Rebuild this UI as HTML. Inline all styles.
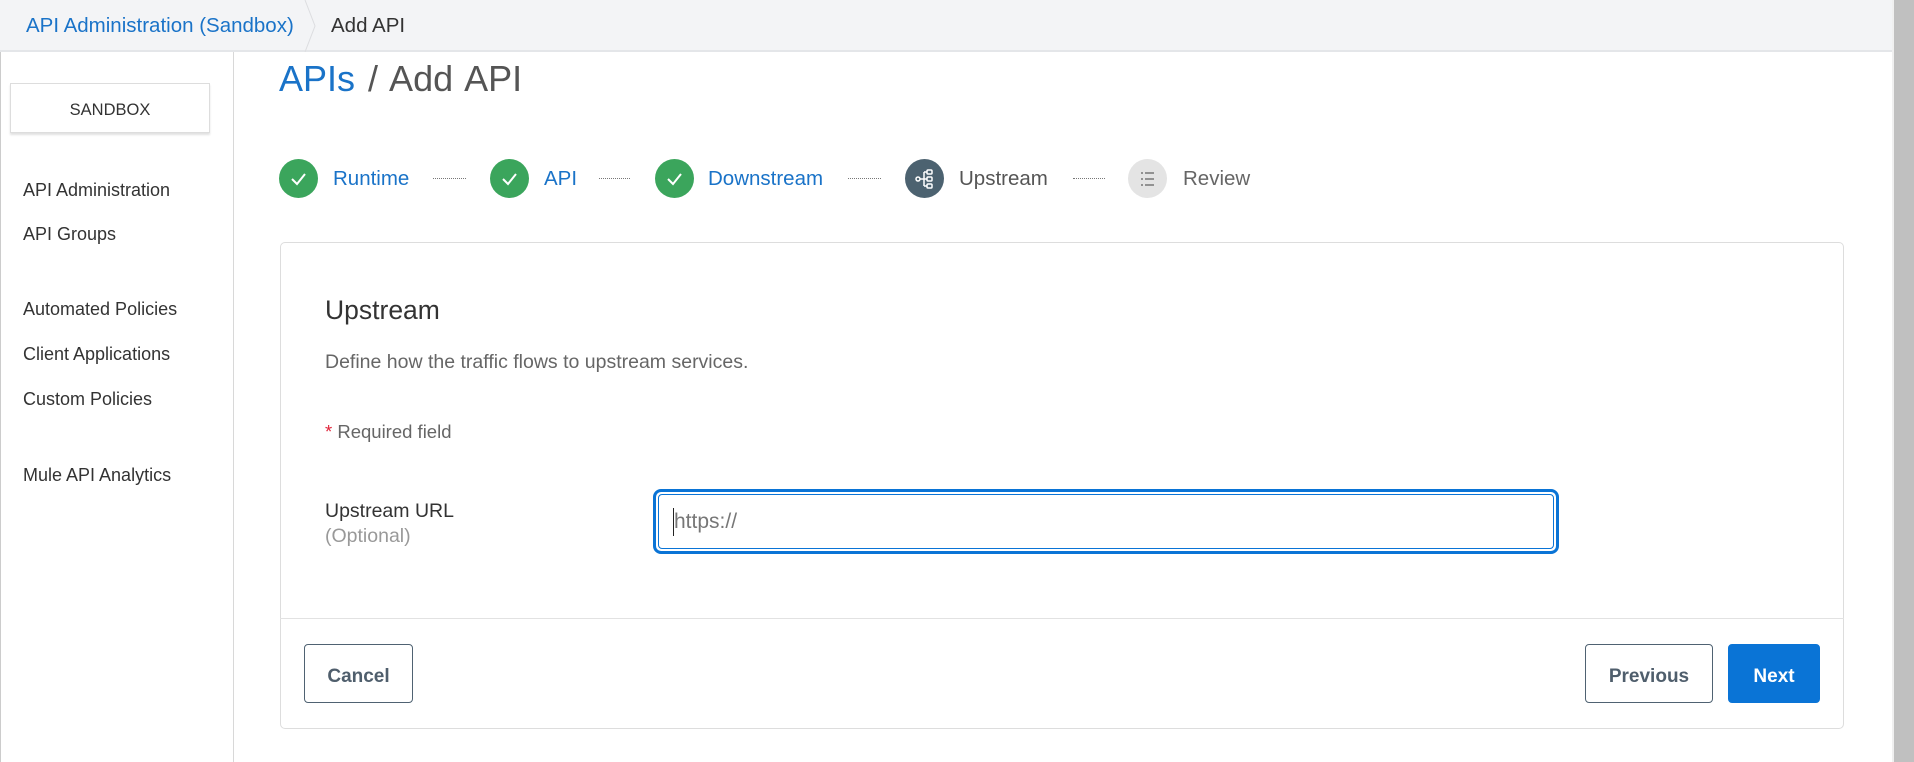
<!DOCTYPE html>
<html><head><meta charset="utf-8"><style>
*{box-sizing:border-box;margin:0;padding:0}
body{width:1914px;height:762px;overflow:hidden;background:#fff;font-family:"Liberation Sans",sans-serif;position:relative;color:#333}
.abs{position:absolute;white-space:nowrap}
.top{position:absolute;left:0;top:0;width:1892px;height:52px;background:#f3f4f6;border-bottom:2px solid #e4e6e9}
.scroll{position:absolute;left:1892px;top:0;width:22px;height:762px;background:#c0c0c0;border-left:2px solid #f0f0f0}
.side{position:absolute;left:0;top:52px;width:234px;height:710px;border-right:1px solid #d8d8d8;border-left:1px solid #ccc}
.sb{position:absolute;left:10px;top:83px;width:200px;height:50px;border:1px solid #ddd;box-shadow:0 2px 2px rgba(0,0,0,.12);text-align:center;line-height:52px;font-size:16.5px;color:#333;background:#fff}
.nav{font-size:18px;color:#333;left:23px}
.circ{position:absolute;width:39px;height:39px;border-radius:50%;top:159px}
.g{background:#3ba55c}
.st{font-size:20.5px;top:167px}
.dot{position:absolute;top:178px;height:0;border-top:1px dotted #777}
.card{position:absolute;left:280px;top:242px;width:1564px;height:487px;border:1px solid #ddd;border-radius:5px}
.btn{position:absolute;top:644px;height:59px;border:1px solid #4f6272;border-radius:4px;font-size:19px;font-weight:bold;color:#4f5e6c;text-align:center;line-height:64px;background:#fff}
</style></head><body>
<div class="top"></div>
<div class="abs" style="left:26px;top:14px;font-size:20.5px;color:#1a73c8">API Administration (Sandbox)</div>
<svg class="abs" style="left:303px;top:0" width="14" height="52"><polyline points="2,0 12,26 2,52" fill="none" stroke="#dcdde0" stroke-width="1"/></svg>
<div class="abs" style="left:331px;top:14px;font-size:20.5px;color:#333">Add API</div>
<div class="scroll"></div>
<div class="side"></div>
<div class="sb">SANDBOX</div>
<div class="abs nav" style="top:180px">API Administration</div>
<div class="abs nav" style="top:224px">API Groups</div>
<div class="abs nav" style="top:299px">Automated Policies</div>
<div class="abs nav" style="top:344px">Client Applications</div>
<div class="abs nav" style="top:389px">Custom Policies</div>
<div class="abs nav" style="top:465px">Mule API Analytics</div>

<div class="abs" style="left:279px;top:58px;font-size:36px;color:#555;word-spacing:3px"><span style="color:#1a73c8">APIs</span> / Add API</div>

<div class="circ g" style="left:279px"><svg width="39" height="39"><polyline points="13,20 18,25 26,15" fill="none" stroke="#fff" stroke-width="2"/></svg></div>
<div class="abs st" style="left:333px;color:#1a73c8">Runtime</div>
<div class="dot" style="left:433px;width:33px"></div>
<div class="circ g" style="left:490px"><svg width="39" height="39"><polyline points="13,20 18,25 26,15" fill="none" stroke="#fff" stroke-width="2"/></svg></div>
<div class="abs st" style="left:544px;color:#1a73c8">API</div>
<div class="dot" style="left:599px;width:31px"></div>
<div class="circ g" style="left:655px"><svg width="39" height="39"><polyline points="13,20 18,25 26,15" fill="none" stroke="#fff" stroke-width="2"/></svg></div>
<div class="abs st" style="left:708px;color:#1a73c8">Downstream</div>
<div class="dot" style="left:848px;width:33px"></div>
<div class="circ" style="left:905px;background:#4c6270"><svg width="39" height="39" fill="none" stroke="#fff" stroke-width="1.5"><circle cx="13" cy="20" r="2"/><rect x="22" y="11" width="5" height="4" rx="1"/><rect x="22" y="18" width="5" height="4" rx="1"/><rect x="22" y="25" width="5" height="4" rx="1"/><path d="M15 20h4M19 13v14M19 13h3M19 20h3M19 27h3"/></svg></div>
<div class="abs st" style="left:959px;color:#555">Upstream</div>
<div class="dot" style="left:1073px;width:32px"></div>
<div class="circ" style="left:1128px;background:#e4e4e4"><svg width="39" height="39" stroke="#777" stroke-width="1.5"><path d="M13 14h2M13 20h2M13 26h2M17 14h9M17 20h9M17 26h9"/></svg></div>
<div class="abs st" style="left:1183px;color:#666">Review</div>

<div class="card"></div>
<div class="abs" style="left:280px;top:618px;width:1564px;border-top:1px solid #e2e2e2"></div>
<div class="abs" style="left:325px;top:295px;font-size:26.5px;color:#333">Upstream</div>
<div class="abs" style="left:325px;top:351px;font-size:19.5px;color:#666">Define how the traffic flows to upstream services.</div>
<div class="abs" style="left:325px;top:421px;font-size:18.5px;color:#666"><span style="color:#e0263b">*</span> Required field</div>
<div class="abs" style="left:325px;top:500px;font-size:19.5px;color:#333">Upstream URL</div>
<div class="abs" style="left:325px;top:525px;font-size:19.5px;color:#999">(Optional)</div>
<div class="abs" style="left:653px;top:489px;width:906px;height:65px;border:3px solid #0a74d6;border-radius:8px;padding:2px"><div style="width:100%;height:100%;border:1px solid #0a74d6;border-radius:4px"></div></div>
<div class="abs" style="left:673px;top:508px;width:1px;height:28px;background:#222"></div>
<div class="abs" style="left:674px;top:510px;font-size:21px;color:#777">https://</div>

<div class="btn" style="left:304px;width:109px">Cancel</div>
<div class="btn" style="left:1585px;width:128px">Previous</div>
<div class="btn" style="left:1728px;width:92px;background:#0a74d6;border-color:#0a74d6;color:#fff">Next</div>
</body></html>
